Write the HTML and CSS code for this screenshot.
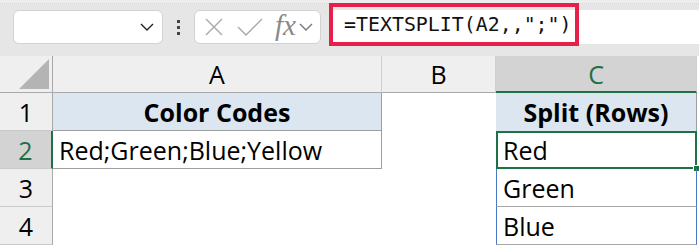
FILE: index.html
```html
<!DOCTYPE html>
<html lang="en">
<head>
    <meta charset="UTF-8">
    <meta name="viewport" content="width=device-width, initial-scale=1.0">
    <title>TEXTSPLIT</title>
    <link rel="stylesheet" href="styles.css">
</head>
<body>
    <div class="ribbon-edge"></div>
    <div class="toolbar">
        <div class="name-box">
            <svg class="chevron" width="14" height="8" viewBox="0 0 14 8"><path d="M1 1 L7 7 L13 1" fill="none" stroke="#222" stroke-width="1.4"/></svg>
        </div>
        <div class="grip"><span></span><span></span><span></span></div>
        <div class="fx-buttons">
            <svg width="20" height="20" viewBox="0 0 20 20"><path d="M2 2 L18 18 M18 2 L2 18" stroke="#a8a8a8" stroke-width="1.4"/></svg>
            <svg width="26" height="20" viewBox="0 0 26 20"><path d="M1 10 L9 18 L25 2" fill="none" stroke="#a8a8a8" stroke-width="1.4"/></svg>
            <span class="fx">fx</span>
            <svg width="14" height="8" viewBox="0 0 14 8"><path d="M1 1 L7 7 L13 1" fill="none" stroke="#777" stroke-width="1.4"/></svg>
        </div>
        <div class="formula-bar">
            <div class="formula">=TEXTSPLIT(A2,,";")</div>
        </div>
    </div>
    <div class="sheet">
        <div class="corner"><div class="triangle"></div></div>
        <div class="col-head">A</div>
        <div class="col-head">B</div>
        <div class="col-head active">C</div>

        <div class="row-head">1</div>
        <div class="cell title bordered">Color Codes</div>
        <div class="cell blank"></div>
        <div class="cell title c1">Split (Rows)</div>

        <div class="row-head active">2</div>
        <div class="cell bordered">Red;Green;Blue;Yellow</div>
        <div class="cell blank"></div>
        <div class="cell selected">Red<span class="handle"></span></div>

        <div class="row-head">3</div>
        <div class="cell empty"></div>
        <div class="cell empty"></div>
        <div class="cell spill">Green</div>

        <div class="row-head">4</div>
        <div class="cell empty"></div>
        <div class="cell empty"></div>
        <div class="cell spill">Blue</div>
    </div>
</body>
</html>
```

FILE: styles.css
```css
* {
    box-sizing: border-box;
}
body {
    margin: 0;
    width: 699px;
    height: 247px;
    overflow: hidden;
    background: #ffffff;
    font-family: "Open Sans", "Noto Sans", sans-serif;
}
.ribbon-edge {
    height: 4px;
    background: #ededed;
    border-bottom: 1px dotted #d6d6d6;
}
.toolbar {
    height: 52px;
    background: #e6e6e6;
    display: flex;
    align-items: flex-start;
    padding: 6px 0 0 13px;
}
.name-box {
    width: 150px;
    height: 34px;
    background: #fff;
    border: 1px solid #d2d2d2;
    border-radius: 6px;
    display: flex;
    align-items: center;
    justify-content: flex-end;
    padding-right: 8px;
}
.grip {
    width: 31px;
    height: 34px;
    display: flex;
    flex-direction: column;
    align-items: center;
    justify-content: center;
    gap: 3px;
}
.grip span {
    width: 3px;
    height: 3px;
    background: #444;
}
.fx-buttons {
    width: 127px;
    height: 34px;
    background: #fff;
    border: 1px solid #d2d2d2;
    border-radius: 6px;
    display: flex;
    align-items: center;
    gap: 0;
    padding-left: 9px;
}
.fx-buttons svg:nth-child(2) {
    margin-left: 13px;
}
.fx {
    font-family: "Liberation Serif", serif;
    font-style: italic;
    font-size: 29px;
    color: #8a8a8a;
    line-height: 1;
    margin: -3px 3px 0 12px;
}
.formula-bar {
    flex: 1;
    height: 34px;
    margin-left: 8px;
    background: #fff;
    border-radius: 6px 0 0 6px;
    position: relative;
}
.formula {
    position: absolute;
    left: 0;
    top: -7px;
    width: 250px;
    height: 43px;
    border: 4px solid #e5214b;
    font-family: "DejaVu Sans Mono", monospace;
    font-size: 19.9px;
    color: #111;
    display: flex;
    align-items: center;
    padding-left: 11px;
}
.sheet {
    display: grid;
    grid-template-columns: 53px 329px 114px 201px;
    grid-template-rows: 37px 38px 38px 38px 38px 2px;
    font-size: 25px;
    color: #000;
}
.corner {
    background: #efefef;
    border-right: 1px solid #a9a9a9;
    border-bottom: 1px solid #a9a9a9;
    position: relative;
}
.triangle {
    position: absolute;
    right: 3px;
    bottom: 3px;
    width: 30px;
    height: 30px;
    background: #b4b4b4;
    clip-path: polygon(100% 0, 100% 100%, 0 100%);
}
.col-head {
    background: #efefef;
    border-right: 1px solid #cfcfcf;
    border-bottom: 1px solid #a9a9a9;
    display: flex;
    align-items: center;
    justify-content: center;
}
.col-head.active {
    background: #d3d3d3;
    color: #1e7145;
    border-bottom: 2px solid #1e7145;
}
.row-head {
    background: #efefef;
    border-right: 1px solid #a9a9a9;
    border-bottom: 1px solid #c9c9c9;
    display: flex;
    align-items: center;
    justify-content: center;
}
.row-head.active {
    background: #d3d3d3;
    color: #1e7145;
    border-right: 2px solid #1e7145;
}
.cell {
    display: flex;
    align-items: center;
    padding-left: 6px;
    position: relative;
}
.title {
    background: #dce6f1;
    font-weight: bold;
    justify-content: center;
    padding-left: 0;
}
.bordered {
    border-right: 1px solid #9e9e9e;
    border-bottom: 1px solid #9e9e9e;
}
.c1 {
    border-right: 1px solid #9e9e9e;
}
.selected {
    border: 2px solid #1e7145;
    padding-left: 5px;
}
.handle {
    position: absolute;
    right: -5px;
    bottom: -5px;
    width: 7px;
    height: 7px;
    background: #1e7145;
    border: 1px solid #fff;
}
.spill {
    border-left: 1px solid #4a78c9;
    border-right: 1px solid #4a78c9;
    border-bottom: 1px solid #a8a8a8;
}
```
